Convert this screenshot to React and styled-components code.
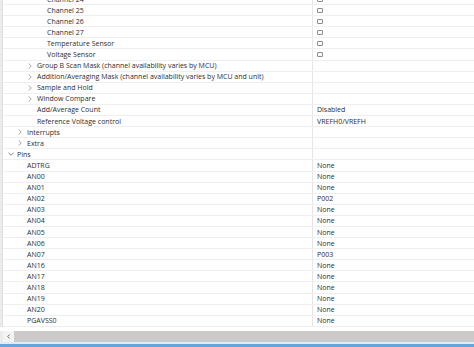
import React from "react";
import styled, { createGlobalStyle } from "styled-components";

const GlobalStyle = createGlobalStyle`
  html, body {
    margin: 0;
    padding: 0;
    background: #ffffff;
    overflow: hidden;
  }
  body {
    font-family: "Open Sans", "Noto Sans", "Liberation Sans", sans-serif;
  }
`;

const Frame = styled.div`
  width: 474px;
  height: 347px;
  display: flex;
  flex-direction: column;
  background: #ffffff;
  overflow: hidden;
`;

const TreeArea = styled.div`
  flex: 1;
  display: flex;
  overflow: hidden;
`;

const LeftStrip = styled.div`
  width: 2px;
  background: #ececec;
  border-right: 1px solid #dedede;
`;

const Table = styled.div`
  flex: 1;
  margin-top: -6px;
  display: flex;
  flex-direction: column;
`;

const Row = styled.div`
  display: grid;
  grid-template-columns: 309px 1fr;
  height: 11.1px;
  box-sizing: border-box;
  border-bottom: 1px solid #efefef;
  font-size: 7px;
  color: #2d2d2d;
`;

const NameCell = styled.div`
  display: flex;
  align-items: center;
  padding-left: ${(p) => 4 + p.$level * 10}px;
  white-space: nowrap;
  overflow: hidden;
`;

const ArrowSlot = styled.span`
  width: 10px;
  flex: none;
  display: flex;
  align-items: center;
  justify-content: flex-start;
  padding-left: 1px;
  box-sizing: border-box;
`;

const ValueCell = styled.div`
  display: flex;
  align-items: center;
  border-left: 1px solid #e6e6e6;
  padding-left: 4px;
  white-space: nowrap;
`;

const Check = styled.span`
  width: 4px;
  height: 3px;
  border: 1px solid #8c8c8c;
  border-radius: 1px;
  background: #fafafa;
`;

const ScrollBar = styled.div`
  height: 11px;
  display: flex;
  margin-top: 4px;
`;

const ScrollButton = styled.div`
  width: 14px;
  border-left: 3px solid #ececec;
  box-sizing: border-box;
  background: #f4f4f4;
  display: flex;
  align-items: center;
  justify-content: center;
`;

const ScrollThumb = styled.div`
  flex: 1;
  background: #cbcac8;
`;

const Stripe = styled.div`
  height: 2px;
  background: #dcebf7;
`;

const BlueBar = styled.div`
  height: 3px;
  background: #68a3da;
`;

function Chevron({ open }) {
  return open ? (
    <svg width="6" height="4" viewBox="0 0 6 4">
      <path d="M0.5 0.8 L3 3.2 L5.5 0.8" fill="none" stroke="#7a7a7a" strokeWidth="0.9" />
    </svg>
  ) : (
    <svg width="4" height="6" viewBox="0 0 4 6">
      <path d="M0.8 0.5 L3.2 3 L0.8 5.5" fill="none" stroke="#9a9a9a" strokeWidth="0.9" />
    </svg>
  );
}

const rows = [
  { name: "Channel 24", level: 3, value: "check" },
  { name: "Channel 25", level: 3, value: "check" },
  { name: "Channel 26", level: 3, value: "check" },
  { name: "Channel 27", level: 3, value: "check" },
  { name: "Temperature Sensor", level: 3, value: "check" },
  { name: "Voltage Sensor", level: 3, value: "check" },
  { name: "Group B Scan Mask (channel availability varies by MCU)", level: 2, arrow: "closed" },
  { name: "Addition/Averaging Mask (channel availability varies by MCU and unit)", level: 2, arrow: "closed" },
  { name: "Sample and Hold", level: 2, arrow: "closed" },
  { name: "Window Compare", level: 2, arrow: "closed" },
  { name: "Add/Average Count", level: 2, value: "Disabled" },
  { name: "Reference Voltage control", level: 2, value: "VREFH0/VREFH" },
  { name: "Interrupts", level: 1, arrow: "closed" },
  { name: "Extra", level: 1, arrow: "closed" },
  { name: "Pins", level: 0, arrow: "open" },
  { name: "ADTRG", level: 1, value: "None" },
  { name: "AN00", level: 1, value: "None" },
  { name: "AN01", level: 1, value: "None" },
  { name: "AN02", level: 1, value: "P002" },
  { name: "AN03", level: 1, value: "None" },
  { name: "AN04", level: 1, value: "None" },
  { name: "AN05", level: 1, value: "None" },
  { name: "AN06", level: 1, value: "None" },
  { name: "AN07", level: 1, value: "P003" },
  { name: "AN16", level: 1, value: "None" },
  { name: "AN17", level: 1, value: "None" },
  { name: "AN18", level: 1, value: "None" },
  { name: "AN19", level: 1, value: "None" },
  { name: "AN20", level: 1, value: "None" },
  { name: "PGAVSS0", level: 1, value: "None" },
];

export default function App() {
  return (
    <Frame>
      <GlobalStyle />
      <TreeArea>
        <LeftStrip />
        <Table>
          {rows.map((r, i) => (
            <Row key={i}>
              <NameCell $level={r.level}>
                <ArrowSlot>{r.arrow && <Chevron open={r.arrow === "open"} />}</ArrowSlot>
                {r.name}
              </NameCell>
              <ValueCell>
                {r.value === "check" ? <Check /> : r.value}
              </ValueCell>
            </Row>
          ))}
        </Table>
      </TreeArea>
      <ScrollBar>
        <ScrollButton>
          <svg width="3" height="5" viewBox="0 0 3 5">
            <path d="M2.5 0.5 L0.7 2.5 L2.5 4.5" fill="none" stroke="#555" strokeWidth="0.8" />
          </svg>
        </ScrollButton>
        <ScrollThumb />
      </ScrollBar>
      <Stripe />
      <BlueBar />
    </Frame>
  );
}
